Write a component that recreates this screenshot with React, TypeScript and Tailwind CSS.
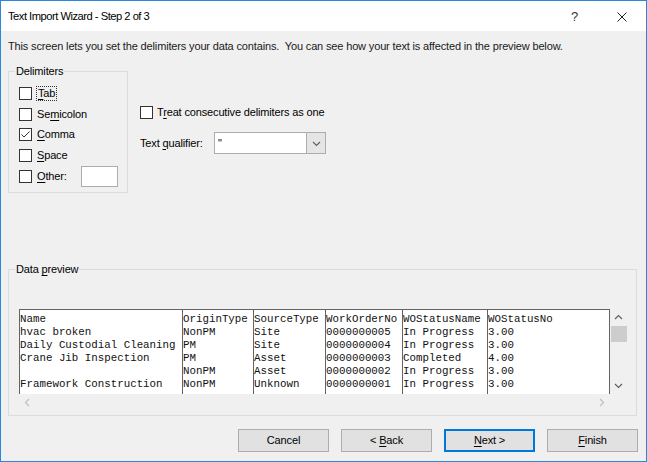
import { ReactNode } from "react";

// Excel "Text Import Wizard - Step 2 of 3" dialog
const ui = "font-['Liberation_Sans',Arial,sans-serif]";
const mono = "font-['Liberation_Mono','Courier_New',monospace]";

const columns = [
  { w: "w-[163px]", cells: ["Name", "hvac broken", "Daily Custodial Cleaning", "Crane Jib Inspection", "", "Framework Construction"] },
  { w: "w-[71px]", cells: ["OriginType", "NonPM", "PM", "PM", "NonPM", "NonPM"] },
  { w: "w-[72px]", cells: ["SourceType", "Site", "Site", "Asset", "Asset", "Unknown"] },
  { w: "w-[77px]", cells: ["WorkOrderNo", "0000000005", "0000000004", "0000000003", "0000000002", "0000000001"] },
  { w: "w-[85px]", cells: ["WOStatusName", "In Progress", "In Progress", "Completed", "In Progress", "In Progress"] },
  { w: "flex-1", cells: ["WOStatusNo", "3.00", "3.00", "4.00", "3.00", "3.00"] },
];

const CheckBox = ({ checked = false }: { checked?: boolean }) => (
  <div className="w-[13px] h-[13px] shrink-0 border border-[#333333] bg-white flex items-center justify-center">
    {checked && (
      <svg width="11" height="11" viewBox="0 0 11 11">
        <path d="M1.5 5.5 L4 8 L9.5 2.5" fill="none" stroke="#333" strokeWidth="1" />
      </svg>
    )}
  </div>
);

const Acc = ({ children }: { children: ReactNode }) => <span className="underline underline-offset-2">{children}</span>;

const Chevron = ({ dir, color = "#606060" }: { dir: "up" | "down" | "left" | "right"; color?: string }) => {
  const d = {
    up: "M1 6 L4.5 2.5 L8 6",
    down: "M1 3 L4.5 6.5 L8 3",
    left: "M6 1 L2.5 4.5 L6 8",
    right: "M3 1 L6.5 4.5 L3 8",
  }[dir];
  return (
    <svg width="9" height="9" viewBox="0 0 9 9">
      <path d={d} fill="none" stroke={color} strokeWidth="1.2" />
    </svg>
  );
};

const Button = ({ children, primary = false }: { children: ReactNode; primary?: boolean }) => (
  <div
    className={`w-[91px] h-[23px] flex items-center justify-center bg-[#e1e1e1] border ${
      primary ? "border-[#0078d7] shadow-[inset_0_0_0_1px_#0078d7]" : "border-[#adadad]"
    }`}
  >
    <span className="whitespace-pre">{children}</span>
  </div>
);

export default function App() {
  return (
    <div className={`w-[647px] h-[462px] border border-[#2b88d8] bg-[#f0f0f0] flex flex-col text-[11px] tracking-[-0.15px] text-black ${ui}`}>
      {/* Title bar */}
      <div className="h-[30px] bg-white flex items-center pl-[7px] pr-[19px] pt-[1px] shrink-0">
        <span className="text-[11.2px] tracking-[-0.5px] text-[#000]">Text Import Wizard - Step 2 of 3</span>
        <span className="ml-auto mr-[39px] text-[13px] text-[#333]">?</span>
        <svg width="10" height="10" viewBox="0 0 10 10">
          <path d="M0.5 0.5 L9.5 9.5 M9.5 0.5 L0.5 9.5" stroke="#222" strokeWidth="1" />
        </svg>
      </div>

      <div className="px-[7px] flex flex-col">
        <p className="mt-[7px] leading-[16px] text-[#1a1a1a]">
          This screen lets you set the delimiters your data contains.&nbsp; You can see how your text is affected in the preview below.
        </p>

        <div className="flex mt-[17px]">
          {/* Delimiters */}
          <div className="relative w-[120px] h-[122px] border border-[#dcdcdc] pl-[10px] pr-[9px] pt-[11px] flex flex-col">
            <span className="absolute left-[6px] -top-[9px] px-[1px] bg-[#f0f0f0] leading-[16px]">Delimiters</span>
            <div className="h-[20.7px] flex items-center gap-[4px]">
              <CheckBox />
              <span className="border border-dotted border-[#333] px-[1px] leading-[13px]">
                <Acc>T</Acc>ab
              </span>
            </div>
            <div className="h-[20.7px] flex items-center gap-[5px]">
              <CheckBox />
              <span>
                Se<Acc>m</Acc>icolon
              </span>
            </div>
            <div className="h-[20.7px] flex items-center gap-[5px]">
              <CheckBox checked />
              <span>
                <Acc>C</Acc>omma
              </span>
            </div>
            <div className="h-[20.7px] flex items-center gap-[5px]">
              <CheckBox />
              <span>
                <Acc>S</Acc>pace
              </span>
            </div>
            <div className="h-[20.7px] flex items-center gap-[5px]">
              <CheckBox />
              <span>
                <Acc>O</Acc>ther:
              </span>
              <div className="ml-auto w-[37px] h-[21px] bg-white border border-[#abadb3]" />
            </div>
          </div>

          {/* Options */}
          <div className="ml-[12px] flex flex-col">
            <div className="mt-[35px] h-[13px] flex items-center gap-[4px]">
              <CheckBox />
              <span>
                T<Acc>r</Acc>eat consecutive delimiters as one
              </span>
            </div>
            <div className="mt-[13px] flex items-center">
              <span className="w-[74px]">
                Text <Acc>q</Acc>ualifier:
              </span>
              <div className="w-[112px] h-[22px] bg-white border border-[#adadad] flex">
                <span className="flex-1 pl-[3px] leading-[20px]">"</span>
                <div className="w-[19px] bg-[#e5e5e5] border-l border-[#adadad] flex items-center justify-center">
                  <Chevron dir="down" />
                </div>
              </div>
            </div>
          </div>
        </div>

        {/* Data preview */}
        <div className="relative mt-[76px] w-[629px] h-[147px] border border-[#dcdcdc] pl-[10px] pt-[39px]">
          <span className="absolute left-[6px] -top-[9px] px-[1px] bg-[#f0f0f0] leading-[16px]">
            Data <Acc>p</Acc>review
          </span>
          <div className="w-[608px] h-[102px] flex flex-col">
            <div className="flex h-[85px]">
              <div className={`flex-1 flex bg-white border-t border-r border-[#646464] text-[10.8px] tracking-normal leading-[13px] text-[#111] ${mono}`}>
                {columns.map((c, i) => (
                  <div key={i} className={`${c.w} border-l border-[#646464] pt-[3px] whitespace-pre overflow-hidden`}>
                    {c.cells.map((t, j) => (
                      <div key={j} className="h-[13px]">
                        {t}
                      </div>
                    ))}
                  </div>
                ))}
              </div>
              <div className="w-[17px] flex flex-col items-center">
                <div className="h-[17px] flex items-center justify-center">
                  <Chevron dir="up" />
                </div>
                <div className="w-[16px] h-[16px] bg-[#cdcdcd] ml-[1px]" />
                <div className="mt-auto h-[17px] flex items-center justify-center">
                  <Chevron dir="down" />
                </div>
              </div>
            </div>
            <div className="h-[17px] flex items-center pl-[4px] pr-[21px]">
              <Chevron dir="left" color="#c0c0c0" />
              <div className="ml-auto">
                <Chevron dir="right" color="#c0c0c0" />
              </div>
            </div>
          </div>
        </div>

        {/* Buttons */}
        <div className="mt-[13px] flex justify-end gap-[12px] pr-[1px]">
          <Button>Cancel</Button>
          <Button>
            &lt; <Acc>B</Acc>ack
          </Button>
          <Button primary>
            <Acc>N</Acc>ext &gt;
          </Button>
          <Button>
            <Acc>F</Acc>inish
          </Button>
        </div>
      </div>
    </div>
  );
}
